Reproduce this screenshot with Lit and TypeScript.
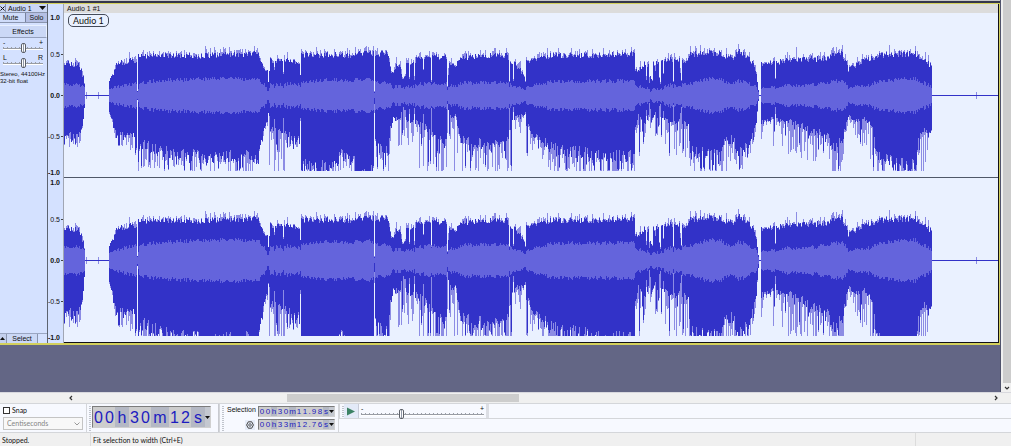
import { LitElement, html, svg, css } from "lit";
import { customElement, property } from "lit/decorators.js";

const CLIP_START = 64;
const CLIP_WIDTH = 934;
const MID = 82;
const FLOOR = 75;

// [time column, upper peak, solid lower peak, ragged lower peak, rms, choppiness]
type Key = [number, number, number, number, number, number];
const ENVELOPE: Key[] = [
  [64, 34, 39, 56, 11, 0], [78, 34, 39, 50, 11, 0], [81, 29, 34, 42, 10, 0], [83, 19, 22, 24, 9, 0], [84, 12, 12, 14, 8, 0],
  [85, 0, 0, 0, 0, 0], [108, 0, 0, 0, 0, 0],
  [109, 14, 16, 18, 6, 0], [113, 25, 28, 32, 8, 0], [116, 34, 38, 48, 9, 0.1], [136, 38, 38, 58, 12, 0.2],
  [137, 4, 4, 4, 4, 0], [138, 46, 72, 75, 8, 0],
  [139, 41, 46, 72, 13, 0], [165, 43, 54, 74, 15, 0], [190, 42, 58, 80, 16, 0], [235, 43, 58, 86, 17, 0], [258, 45, 60, 86, 16, 0],
  [260, 37, 44, 58, 14, 0], [264, 29, 28, 38, 11, 0], [267, 25, 24, 30, 6, 0], [268, 14, 15, 20, 4, 0],
  [269, 38, 30, 82, 11, 0.1], [284, 38, 35, 80, 11, 0.1], [288, 37, 38, 54, 12, 0], [299, 35, 43, 54, 11, 0], [300, 20, 22, 28, 8, 0],
  [301, 43, 68, 82, 13, 0], [328, 43, 70, 85, 16, 0], [340, 43, 58, 82, 15, 0], [352, 41, 58, 82, 14, 0], [356, 44, 74, 90, 16, 0],
  [372, 45, 75, 90, 16, 0], [373, 45, 75, 82, 13, 0], [374, 4, 8, 70, 4, 0], [375, 44, 46, 74, 13, 0], [387, 44, 54, 85, 13, 0.1],
  [388, 40, 56, 76, 13, 0], [390, 28, 33, 46, 11, 0], [393, 24, 18, 26, 8, 0], [397, 34, 24, 50, 9, 0.4], [414, 35, 24, 54, 9, 0.7],
  [416, 40, 25, 82, 11, 0.3], [430, 41, 34, 86, 12, 0.1], [446, 41, 44, 88, 12, 0.1], [447, 8, 8, 45, 5, 0], [449, 34, 20, 70, 9, 0.4],
  [456, 34, 20, 80, 10, 0.3], [459, 40, 40, 86, 12, 0.1], [475, 42, 46, 88, 13, 0], [506, 42, 46, 86, 13, 0], [511, 37, 26, 80, 11, 0.3],
  [517, 32, 20, 50, 8, 0.3], [523, 24, 20, 28, 6, 0], [525, 14, 16, 22, 5, 0],
  [526, 36, 28, 70, 8, 0], [535, 38, 38, 56, 10, 0], [552, 43, 51, 80, 14, 0], [590, 42, 56, 84, 14, 0], [632, 44, 58, 86, 15, 0],
  [634, 42, 54, 80, 14, 0], [635, 30, 32, 40, 11, 0], [638, 28, 20, 58, 9, 0.2], [644, 34, 26, 56, 9, 0.5], [648, 33, 20, 38, 7, 0.8],
  [662, 35, 20, 40, 7, 0.8], [668, 38, 24, 60, 10, 0.3], [688, 38, 26, 62, 11, 0.4], [690, 43, 54, 76, 12, 0], [705, 45, 56, 80, 16, 0],
  [720, 45, 57, 82, 17, 0], [725, 41, 44, 74, 13, 0], [734, 41, 42, 64, 12, 0], [738, 48, 57, 80, 15, 0], [747, 41, 48, 62, 13, 0],
  [753, 33, 38, 50, 10, 0], [756, 22, 24, 28, 8, 0], [758, 5, 5, 6, 3, 0], [759, 0, 0, 0, 0, 0], [760, 0, 0, 0, 0, 0],
  [761, 35, 26, 48, 8, 0], [772, 35, 22, 48, 9, 0.1], [790, 38, 25, 56, 10, 0.1], [812, 39, 34, 64, 11, 0], [826, 39, 38, 60, 12, 0],
  [834, 44, 48, 84, 14, 0], [842, 44, 44, 84, 14, 0], [843, 40, 38, 60, 13, 0], [846, 34, 28, 40, 11, 0], [848, 28, 18, 26, 8, 0], [858, 35, 24, 44, 9, 0.1],
  [864, 38, 22, 50, 10, 0.2], [865, 38, 22, 86, 10, 0.2], [873, 40, 32, 86, 11, 0.2], [875, 42, 56, 88, 13, 0], [895, 44, 66, 86, 16, 0], [915, 44, 70, 88, 17, 0], [919, 41, 38, 88, 13, 0.1],
  [925, 39, 34, 72, 12, 0], [931, 31, 34, 38, 9, 0], [932, 0, 0, 0, 0, 0], [998, 0, 0, 0, 0, 0],
];

const TRANSIENTS = [86, 98, 976];
const PEAKS: Record<number, number> = { 225: 4, 372: 3, 738: 5, 796: 8, 889: 3 };

function noise(seed: number) {
  let s = seed;
  return () => {
    s = (s + 0x6d2b79f5) | 0;
    let t = Math.imul(s ^ (s >>> 15), 1 | s);
    t = (t + Math.imul(t ^ (t >>> 7), 61 | t)) ^ t;
    return ((t ^ (t >>> 14)) >>> 0) / 4294967296;
  };
}

function envelopeAt(x: number): number[] {
  let i = 0;
  while (i < ENVELOPE.length - 2 && ENVELOPE[i + 1][0] <= x) i++;
  const a = ENVELOPE[i];
  const b = ENVELOPE[i + 1];
  const t = Math.min(1, (x - a[0]) / (b[0] - a[0]));
  return a.slice(1).map((v, k) => v + (b[k + 1] - v) * t);
}

function buildChannel(gain: number, rmsGain: number) {
  const rand = noise(41);
  let soft = "";
  let solid = "";
  let rms = "";
  const column = (i: number, up: number, down: number) => {
    const u = Math.round(up);
    const d = Math.round(down);
    return `M${i} ${MID - u}h1v${u + d + 1}h-1z`;
  };
  for (let i = 0; i < CLIP_WIDTH; i++) {
    const x = i + CLIP_START;
    const [top, low, ragged, body, chop] = envelopeAt(x);
    const r = [rand(), rand(), rand(), rand(), rand(), rand(), rand()];
    if (top < 1) {
      solid += column(i, 0, 0);
      if (TRANSIENTS.includes(x)) soft += column(i, 3, 3);
      continue;
    }
    const rough = top > 20 ? 1 : 0.2;
    const dip = r[0] < chop * 0.5 ? 0.35 + r[1] * 0.4 : 1;
    const up = (top - r[2] * 6 * rough) * dip;
    const tip = up + (r[3] < 0.5 ? r[4] * 7 : r[4] * 2) * rough + (PEAKS[x] ?? 0);
    let down = Math.min(FLOOR, low * gain * dip * (1 + (r[5] - 0.35) * 0.25 * rough));
    let fall = Math.min(FLOOR, Math.max(down, low * gain + (ragged - low) * gain * r[1] * 1.1));
    if (r[6] > 0.8) down = down + (fall - down) * 0.9;
    if (r[6] < 0.2) fall = down + (fall - down) * 0.25;
    const inner = Math.min(up - 1, (body * rmsGain + (r[4] - 0.6) * 4 * rough) * (dip < 1 ? 0.75 : 1));
    soft += column(i, tip, fall);
    solid += column(i, up, down);
    if (inner > 1) rms += column(i, inner, inner);
  }
  return { soft, solid, rms };
}

@customElement("wave-channel")
class WaveChannel extends LitElement {
  @property({ type: Number }) gain = 1;
  @property({ type: Number }) rms = 1;

  static styles = css`
    :host { display: block; background: #eaf1ff; overflow: hidden; }
    .plot { display: block; width: 100%; height: 100%; }
    .soft { fill: #8c8ce4; }
    .solid { fill: #3232c8; }
    .rms { fill: #6464dc; }
  `;

  render() {
    const w = buildChannel(this.gain, this.rms);
    return html`<svg class="plot" viewBox="0 0 ${CLIP_WIDTH} 164" preserveAspectRatio="none" shape-rendering="crispEdges" aria-hidden="true">
      ${svg`<path class="soft" d=${w.soft}></path><path class="solid" d=${w.solid}></path><path class="rms" d=${w.rms}></path>`}
    </svg>`;
  }
}

@customElement("time-field")
class TimeField extends LitElement {
  @property() value = "";
  @property() label = "";
  @property({ type: Boolean, reflect: true }) large = false;

  static styles = css`
    :host {
      display: flex; box-sizing: border-box; height: 11px; width: 77px;
      border: 1px solid #7c7c7c; border-right-color: #d0d0d0; border-bottom-color: #d0d0d0;
      background: #b4b8c4; color: #1c1cc0; font: 8px/10px "Liberation Sans", Arial, sans-serif;
    }
    :host([large]) { height: 22px; width: 119px; font-size: 16px; line-height: 22px; }
    .cells { display: flex; flex: 1; }
    .cell { flex: 0 0 6px; text-align: center; background: #cdcdcd; }
    .unit { background: #b4b8c4; }
    .wide { flex-basis: 7px; display: flex; justify-content: center; }
    .dot { flex-basis: 3px; }
    :host([large]) .cell { flex-basis: 11px; }
    :host([large]) .unit { flex-basis: 14px; }
    :host([large]) .wide { flex-basis: 18px; }
    .menu { flex: 0 0 5px; padding: 0; border: 0; background: #c4c8d0; display: flex; align-items: center; justify-content: center; }
    .arrow { width: 5px; height: 3px; display: block; flex: none; }
  `;

  render() {
    return html`
      <div class="cells" role="timer" aria-label=${this.label}>
        ${[...this.value].map((c) => html`<span class="cell ${/[hs]/.test(c) ? "unit" : c === "m" ? "unit wide" : c === "." ? "dot" : ""}">${c}</span>`)}
      </div>
      <button class="menu" aria-label="${this.label} format"><svg class="arrow" viewBox="0 0 5 3"><path d="M0 0h5L2.500 3z" fill="#111" /></svg></button>
    `;
  }
}

@customElement("tick-slider")
class TickSlider extends LitElement {
  @property() label = "";
  @property({ type: Number }) value = 50;
  @property() low = "-";
  @property() high = "+";

  static styles = css`
    :host { display: block; font: 7px/7px "Liberation Sans", Arial, sans-serif; color: #111; }
    .ends { display: flex; justify-content: space-between; height: 6px; }
    .range {
      display: block; appearance: none; width: 100%; height: 10px; margin: -2px 0 0; border: 0;
      background:
        linear-gradient(#989ca4, #989ca4) 0 5px / 100% 1px no-repeat,
        linear-gradient(#ffffff, #ffffff) 0 6px / 100% 1px no-repeat,
        repeating-linear-gradient(90deg, #9ca0a8 0 1px, transparent 1px 4px) 0 4px / 100% 1px no-repeat;
    }
    .range::-webkit-slider-thumb {
      appearance: none; width: 5px; height: 10px; border: 1px solid #5c6068; border-radius: 2px;
      background: linear-gradient(90deg, #fff 1px, #9098a8 1px 2px, #fff 2px); box-sizing: border-box;
    }
  `;

  render() {
    return html`<div class="ends"><span>${this.low}</span><span>${this.high}</span></div>
      <input class="range" type="range" min="0" max="100" .value=${String(this.value)} aria-label=${this.label} />`;
  }
}

@customElement("app-root")
class AppRoot extends LitElement {
  static styles = css`
    :host { display: block; background: #fff; color: #111; font: 7px/9px "Liberation Sans", Arial, sans-serif; }
    * { box-sizing: border-box; }
    button { font: inherit; color: inherit; padding: 0; margin: 0; border: 0; }
    .app { display: flex; flex-direction: column; min-height: 100vh; margin-right: 13px; background: #f0f0f0; }
    .workspace { flex: 1; display: flex; background: #636685; }
    .tracks { flex: 1; min-width: 0; border-right: 1px solid #50536c; }
    .track { display: flex; border: solid #d3d05c; border-width: 1px 1px 2px 0; }
    .edge { height: 3px; background: #34364c; border-top: 1px solid #c8c8c8; }

    .panel { width: 48px; flex: none; display: flex; flex-direction: column; background: #d4e1ff; border-right: 1px solid #5d6470; }
    .head { display: flex; height: 9px; background: #cbd7f5; border-bottom: 1px solid #8a95ae; }
    .close { width: 6px; background: none; border-right: 1px solid #8a95ae; display: flex; align-items: center; }
    .name { flex: 1; background: none; display: flex; align-items: center; justify-content: space-between; padding: 0 1px 0 2px; }
    .glyph { display: block; flex: none; }
    .pair { display: flex; height: 10px; border-bottom: 1px solid #8a95ae; }
    .mute { flex: 1; background: #cfdcfa; padding-right: 4px; }
    .solo { flex: 1; background: #b4bfe4; border-left: 1px solid #7783a0; }
    .effects { height: 13px; margin-top: 2px; background: #cbd8f6; border: solid #e8f0ff; border-width: 1px 1px 1px 0; border-bottom-color: #94a0bc; }
    .sliders { display: flex; flex-direction: column; gap: 1px; padding: 1px 4px 0 3px; }
    .info { font-size: 6px; line-height: 7px; white-space: nowrap; padding-top: 3px; }
    .foot { display: flex; margin-top: auto; height: 10px; border-top: 1px solid #9aa6c2; }
    .collapse { width: 7px; background: #c4d0ee; border-right: 1px solid #8a95ae; display: flex; align-items: center; }
    .select { width: 31px; background: #cbd8f6; border-right: 1px solid #8a95ae; }

    .ruler { width: 16px; flex: none; display: flex; flex-direction: column; padding-top: 9px; background: #d4e1ff; border-right: 1px solid #a0a6b4; }
    .scale { display: grid; grid-template-rows: 21px 41px 41px 41px 20px; align-items: center; text-align: right; }
    .scale + .scale { margin-top: 1px; }
    .scale span { padding-right: 3px; margin-left: -4px; line-height: 9px; background: linear-gradient(#444, #444) right 4px / 2px 1px no-repeat; }
    .scale .end { background: none; font-weight: bold; align-self: start; }
    .scale .end:last-child { align-self: end; }
    .scale .zero { font-weight: bold; }

    .clip { position: relative; flex: 1; min-width: 0; border-right: 1px solid #101018; border-bottom: 1px solid #101018; background: #eaf1ff; }
    .title { height: 9px; background: #dcdcdc; padding-left: 3px; line-height: 10px; }
    .channel { height: 164px; }
    .channel + .channel { border-top: 1px solid #505868; height: 165px; }
    .tag { position: absolute; left: 4px; top: 10px; height: 13px; padding: 0 4px; border: 1px solid #444b5a; border-radius: 5px; background: #eaf1ff; font: 9px/11px Lato, sans-serif; }

    .vscroll { width: 10px; flex: none; background: #cdcdcd; border: solid #f0f0f0; border-width: 0 0 0 2px; display: flex; align-items: flex-end; }
    .step { display: flex; align-items: center; justify-content: center; background: #f0f0f0; }
    .vscroll .step { width: 100%; height: 9px; }
    .hscroll { display: flex; height: 11px; padding-left: 66px; border-top: 1px solid #d8d8de; background: #f0f0f0; }
    .hscroll .step { width: 10px; }
    .rail { flex: 1; display: grid; grid-template-columns: 211px 232px 1fr; padding-top: 1px; }
    .thumb { grid-column: 2; background: #cdcdcd; height: 8px; }

    .bars { display: flex; height: 30px; border: solid #d4d6da; border-width: 1px 0; background: #f7f9ff; }
    .grip { width: 5px; flex: none; border-left: 1px solid #d4d6da; background: repeating-linear-gradient(#c0c4cc 0 1px, #f7f9ff 1px 2px) 2px 2px / 2px 100% no-repeat; }
    .snap { width: 86px; padding: 2px 3px 0; display: flex; flex-direction: column; gap: 3px; font-family: Lato, sans-serif; }
    .check { display: flex; align-items: center; gap: 2px; line-height: 8px; }
    .box { appearance: none; width: 7px; height: 7px; margin: 0; border: 1px solid #333; background: #fff; }
    .combo { position: relative; }
    .unit { appearance: none; display: block; width: 80px; height: 13px; padding: 0 3px; border: 1px solid #c4c4c4; border-radius: 0; background: #f8f8f8; color: #858585; opacity: 1; font: 7px/11px Lato, sans-serif; }
    .chev { position: absolute; right: 3px; top: 5px; pointer-events: none; }
    .clock { padding: 2px 7px 0 1px; border-right: 1px solid #c8cad0; }
    .selection { display: grid; grid-template-columns: 31px 77px; grid-auto-rows: 13px; padding: 1px 3px 0 3px; align-items: center; }
    .caption { align-self: start; }
    .gear { width: 10px; height: 10px; margin-left: 18px; background: #e6ecf8; display: flex; align-items: center; justify-content: center; }
    .play-row { flex: 1; border-left: 1px solid #d4d6da; }
    .play { display: flex; height: 15px; border-bottom: 1px solid #d4d6da; }
    .go { width: 15px; background: #e3eaf8; border-right: 1px solid #c8ccd8; display: flex; align-items: center; justify-content: center; }
    .speed { width: 125px; padding: 1px 0 0 2px; }
    .stop { width: 3px; margin-left: 2px; background: #dcdee4; }
    .status { display: grid; grid-template-columns: 88px 1fr 96px; height: 13px; padding-left: 2px; font: 7px/14px Lato, sans-serif; background: #f0f0f0; }
    .status span + span { border-left: 1px solid #dcdcdc; padding-left: 2px; }
  `;

  private chevron(d: string) {
    return html`<svg class="glyph" width="6" height="6" viewBox="0 0 6 6"><path d=${d} fill="none" stroke="#333" stroke-width="1.200" /></svg>`;
  }

  private scale() {
    return html`<div class="scale"><span class="end">1.0</span><span>0.5</span><span class="zero">0.0</span><span>-0.5</span><span class="end">-1.0</span></div>`;
  }

  render() {
    return html`
      <main class="app">
        <div class="workspace">
          <section class="tracks">
            <div class="edge"></div>
            <div class="track">
              <div class="panel">
                <div class="head">
                  <button class="close" aria-label="Close track"><svg class="glyph" width="5" height="5" viewBox="0 0 5 5"><path d="M.5.5l4 4m0-4l-4 4" stroke="#111" /></svg></button>
                  <button class="name">Audio 1<svg class="glyph" width="7" height="4" viewBox="0 0 7 4"><path d="M0 0h7L3.500 4z" fill="#111" /></svg></button>
                </div>
                <div class="pair"><button class="mute">Mute</button><button class="solo">Solo</button></div>
                <button class="effects">Effects</button>
                <div class="sliders">
                  <tick-slider label="Gain"></tick-slider>
                  <tick-slider label="Pan" low="L" high="R"></tick-slider>
                </div>
                <div class="info">Stereo, 44100Hz<br />32-bit float</div>
                <div class="foot">
                  <button class="collapse" aria-label="Collapse"><svg class="glyph" width="5" height="3" viewBox="0 0 5 3"><path d="M0 3h5L2.500 0z" fill="#111" /></svg></button>
                  <button class="select">Select</button>
                </div>
              </div>
              <div class="ruler">${this.scale()}${this.scale()}</div>
              <div class="clip">
                <div class="title">Audio 1 #1</div>
                <wave-channel class="channel" .gain=${1} .rms=${1}></wave-channel>
                <wave-channel class="channel" .gain=${1.3} .rms=${1.22}></wave-channel>
                <span class="tag">Audio 1</span>
              </div>
            </div>
          </section>
          <div class="vscroll"><button class="step" aria-label="Scroll down">${this.chevron("M1 2l2 2 2-2")}</button></div>
        </div>
        <div class="hscroll">
          <button class="step" aria-label="Scroll left">${this.chevron("M4 1L2 3l2 2")}</button>
          <div class="rail"><div class="thumb"></div></div>
          <button class="step" aria-label="Scroll right">${this.chevron("M2 1l2 2-2 2")}</button>
          <div class="step"></div>
        </div>
        <div class="bars">
          <div class="snap">
            <label class="check"><input class="box" type="checkbox" />Snap</label>
            <div class="combo">
              <select class="unit" aria-label="Snap to" disabled><option>Centiseconds</option></select>
              <svg class="chev" width="6" height="4" viewBox="0 0 6 4"><path d="M.5.5L3 3 5.500.5" fill="none" stroke="#999" /></svg>
            </div>
          </div>
          <div class="grip"></div>
          <div class="clock"><time-field large value="00h30m12s" label="Audio position"></time-field></div>
          <div class="grip"></div>
          <div class="selection">
            <span class="caption">Selection</span>
            <time-field value="00h30m11.98s" label="Selection start"></time-field>
            <button class="gear" aria-label="Selection settings"><svg class="glyph" width="8" height="8" viewBox="0 0 8 8"><path d="M2.300.8h3.400L7.400 4 5.700 7.200H2.300L.6 4z" fill="none" stroke="#444" /><circle cx="4" cy="4" r="1.300" fill="none" stroke="#444" stroke-width=".8" /></svg></button>
            <time-field value="00h33m12.76s" label="Selection end"></time-field>
          </div>
          <div class="play-row">
            <div class="play">
              <div class="grip"></div>
              <button class="go" aria-label="Play at speed"><svg class="glyph" width="8" height="9" viewBox="0 0 8 9"><path d="M0 0.500L8 4.500 0 8.500z" fill="#3c8264" /></svg></button>
              <tick-slider class="speed" label="Playback speed" .value=${32}></tick-slider>
              <div class="stop"></div>
            </div>
          </div>
        </div>
        <footer class="status"><span>Stopped.</span><span>Fit selection to width (Ctrl+E)</span><span></span></footer>
      </main>
    `;
  }
}
